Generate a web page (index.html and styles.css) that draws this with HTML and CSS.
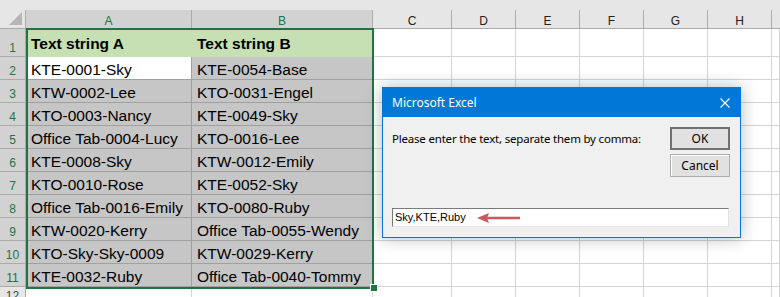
FILE: index.html
```html
<!DOCTYPE html>
<html lang="en">
<head>
    <meta charset="UTF-8">
    <title>Excel - split text by comma</title>
    <link rel="stylesheet" href="styles.css">
</head>
<body>
    <div class="sheet">
        <div class="strip"></div>

        <div class="corner"><span class="tri"></span></div>
        <div class="ch ch-sel">A</div>
        <div class="ch ch-sel">B</div>
        <div class="ch">C</div>
        <div class="ch">D</div>
        <div class="ch">E</div>
        <div class="ch">F</div>
        <div class="ch">G</div>
        <div class="ch">H</div>
        <div class="ch ch-last"></div>

        <div class="rh">1</div>
        <div class="c head">Text string A</div>
        <div class="c head">Text string B</div>
        <div class="c"></div><div class="c"></div><div class="c"></div><div class="c"></div><div class="c"></div><div class="c"></div><div class="c"></div>

        <div class="rh">2</div>
        <div class="c active">KTE-0001-Sky</div>
        <div class="c sel">KTE-0054-Base</div>
        <div class="c"></div><div class="c"></div><div class="c"></div><div class="c"></div><div class="c"></div><div class="c"></div><div class="c"></div>

        <div class="rh">3</div>
        <div class="c sel">KTW-0002-Lee</div>
        <div class="c sel">KTO-0031-Engel</div>
        <div class="c"></div><div class="c"></div><div class="c"></div><div class="c"></div><div class="c"></div><div class="c"></div><div class="c"></div>

        <div class="rh">4</div>
        <div class="c sel">KTO-0003-Nancy</div>
        <div class="c sel">KTE-0049-Sky</div>
        <div class="c"></div><div class="c"></div><div class="c"></div><div class="c"></div><div class="c"></div><div class="c"></div><div class="c"></div>

        <div class="rh">5</div>
        <div class="c sel">Office Tab-0004-Lucy</div>
        <div class="c sel">KTO-0016-Lee</div>
        <div class="c"></div><div class="c"></div><div class="c"></div><div class="c"></div><div class="c"></div><div class="c"></div><div class="c"></div>

        <div class="rh">6</div>
        <div class="c sel">KTE-0008-Sky</div>
        <div class="c sel">KTW-0012-Emily</div>
        <div class="c"></div><div class="c"></div><div class="c"></div><div class="c"></div><div class="c"></div><div class="c"></div><div class="c"></div>

        <div class="rh">7</div>
        <div class="c sel">KTO-0010-Rose</div>
        <div class="c sel">KTE-0052-Sky</div>
        <div class="c"></div><div class="c"></div><div class="c"></div><div class="c"></div><div class="c"></div><div class="c"></div><div class="c"></div>

        <div class="rh">8</div>
        <div class="c sel">Office Tab-0016-Emily</div>
        <div class="c sel">KTO-0080-Ruby</div>
        <div class="c"></div><div class="c"></div><div class="c"></div><div class="c"></div><div class="c"></div><div class="c"></div><div class="c"></div>

        <div class="rh">9</div>
        <div class="c sel">KTW-0020-Kerry</div>
        <div class="c sel">Office Tab-0055-Wendy</div>
        <div class="c"></div><div class="c"></div><div class="c"></div><div class="c"></div><div class="c"></div><div class="c"></div><div class="c"></div>

        <div class="rh">10</div>
        <div class="c sel">KTO-Sky-Sky-0009</div>
        <div class="c sel">KTW-0029-Kerry</div>
        <div class="c"></div><div class="c"></div><div class="c"></div><div class="c"></div><div class="c"></div><div class="c"></div><div class="c"></div>

        <div class="rh">11</div>
        <div class="c sel">KTE-0032-Ruby</div>
        <div class="c sel">Office Tab-0040-Tommy</div>
        <div class="c"></div><div class="c"></div><div class="c"></div><div class="c"></div><div class="c"></div><div class="c"></div><div class="c"></div>

        <div class="rh rh-plain">12</div>
        <div class="c"></div><div class="c"></div><div class="c"></div><div class="c"></div><div class="c"></div><div class="c"></div><div class="c"></div><div class="c"></div><div class="c"></div>

        <!-- selection outline A1:B11 -->
        <div class="selection"></div>
        <div class="handle"></div>
    </div>

    <div class="dialog">
        <div class="titlebar">
            <span class="title">Microsoft Excel</span>
            <svg class="close" width="10" height="10" viewBox="0 0 10 10">
                <path d="M0.5 0.5 L9.5 9.5 M9.5 0.5 L0.5 9.5" stroke="#fff" stroke-width="1.1" fill="none"/>
            </svg>
        </div>
        <div class="dlg-body">
            <div class="dlg-top">
                <div class="prompt">Please enter the text, separate them by comma:</div>
                <div class="buttons">
                    <button class="btn btn-default">OK</button>
                    <button class="btn">Cancel</button>
                </div>
            </div>
            <div class="field">
                <div class="input">Sky,KTE,Ruby</div>
                <svg class="arrow" width="44" height="12" viewBox="0 0 44 12">
                    <path d="M10 6 L43 6" stroke="#c85a5e" stroke-width="2.4" fill="none"/>
                    <path d="M0 6 L12 1 L10 6 L12 11 Z" fill="#c85a5e"/>
                </svg>
            </div>
        </div>
    </div>
</body>
</html>
```

FILE: styles.css
```css
body {
    margin: 0;
    width: 780px;
    height: 297px;
    overflow: hidden;
    background: #fff;
    font-family: "Liberation Sans", Arial, sans-serif;
}

/* ---- spreadsheet ---- */
.sheet {
    position: relative;
    display: grid;
    grid-template-columns: 26px 166px 181px 79px repeat(5, 64px) 1fr;
    grid-template-rows: 10px 19px 28px repeat(10, 23px) 1fr;
    height: 297px;
}

.strip {
    grid-column: 1 / -1;
    background: #e6e6e6;
}

.corner {
    position: relative;
    background: #e6e6e6;
    border-right: 1px solid #ababab;
    border-bottom: 1px solid #ababab;
}

.tri {
    position: absolute;
    right: 3px;
    bottom: 3px;
    width: 0;
    height: 0;
    border-left: 13px solid transparent;
    border-bottom: 13px solid #b6b6b6;
}

.ch {
    box-sizing: border-box;
    background: #e6e6e6;
    border-right: 1px solid #ababab;
    border-bottom: 1px solid #ababab;
    font-size: 12px;
    color: #222;
    display: flex;
    align-items: center;
    justify-content: center;
    padding-top: 3px;
}

.ch-sel {
    background: #d2d2d2;
    color: #217346;
}

.ch-last {
    border-right: none;
}

.rh {
    box-sizing: border-box;
    background: #d2d2d2;
    border-bottom: 1px solid #ababab;
    border-right: 1px solid #ababab;
    color: #217346;
    font-size: 12px;
    display: flex;
    align-items: flex-end;
    justify-content: center;
    padding-bottom: 1px;
}

.rh-plain {
    background: #e6e6e6;
    color: #444;
    align-items: flex-start;
    padding-top: 2px;
}

.c {
    box-sizing: border-box;
    border-right: 1px solid #d4d4d4;
    border-bottom: 1px solid #d4d4d4;
    font-size: 15.5px;
    color: #000;
    white-space: nowrap;
    overflow: hidden;
    display: flex;
    align-items: flex-end;
    padding: 0 0 0 5px;
}

.head {
    background: #c6e0b4;
    font-weight: bold;
    border-color: #c6e0b4;
    padding-bottom: 3px;
}

.sel {
    background: #c6c6c6;
    border-color: #a0a0a0;
}

.active {
    background: #fff;
    border-color: #a0a0a0;
}

.selection {
    position: absolute;
    left: 26px;
    top: 28px;
    width: 348px;
    height: 261px;
    box-sizing: border-box;
    border: 2px solid #217346;
    pointer-events: none;
}

.handle {
    position: absolute;
    left: 370px;
    top: 284px;
    width: 6px;
    height: 6px;
    background: #217346;
    border: 1px solid #fff;
}

/* ---- dialog ---- */
.dialog {
    position: absolute;
    left: 382px;
    top: 87px;
    width: 359px;
    height: 151px;
    box-sizing: border-box;
    border: 1px solid #0078d7;
    background: #f0f0f0;
    box-shadow: 0 0 16px rgba(0, 0, 0, 0.28);
    display: flex;
    flex-direction: column;
    font-family: "Noto Sans", "Open Sans", sans-serif;
}

.titlebar {
    height: 29px;
    background: #0078d7;
    color: #fff;
    display: flex;
    align-items: center;
    justify-content: space-between;
    padding: 0 10px 0 9px;
}

.title {
    font-size: 12px;
}

.close {
    display: block;
}

.dlg-body {
    flex: 1;
    display: flex;
    flex-direction: column;
    padding: 10px 10px 0 9px;
}

.dlg-top {
    display: flex;
    justify-content: space-between;
    height: 81px;
}

.prompt {
    font-size: 11.5px;
    color: #000;
    padding-top: 4px;
    letter-spacing: -0.2px;
}

.buttons {
    display: flex;
    flex-direction: column;
    gap: 4px;
}

.btn {
    width: 60px;
    height: 23px;
    box-sizing: border-box;
    background: #e1e1e1;
    border: 1px solid #adadad;
    box-shadow: inset 1px 1px 0 #fff;
    font-family: "Noto Sans", "Open Sans", sans-serif;
    font-size: 12px;
    color: #000;
    padding: 0;
}

.btn-default {
    border: 2px solid #707070;
    box-shadow: none;
}

.field {
    position: relative;
}

.input {
    width: 337px;
    height: 19px;
    box-sizing: border-box;
    background: #fff;
    border-top: 1px solid #7a7a7a;
    border-left: 1px solid #7a7a7a;
    border-right: 1px solid #e3e3e3;
    border-bottom: 1px solid #e3e3e3;
    font-family: "Liberation Sans", Arial, sans-serif;
    font-size: 11px;
    line-height: 17px;
    padding-left: 2px;
}

.arrow {
    position: absolute;
    left: 85px;
    top: 4px;
}
```
